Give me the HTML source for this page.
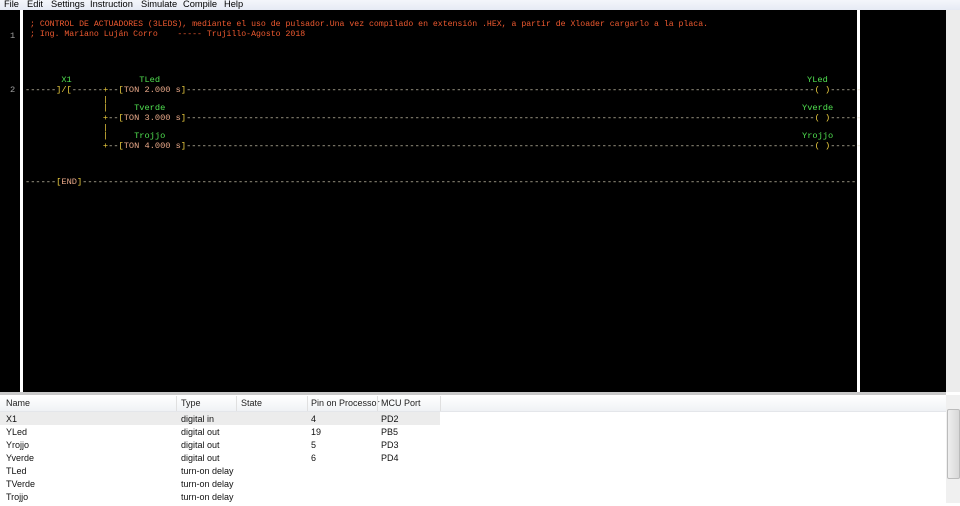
<!DOCTYPE html>
<html><head><meta charset="utf-8"><style>
*{margin:0;padding:0}
body{width:960px;height:503px;overflow:hidden;background:#fff;position:relative;font-family:"Liberation Sans",sans-serif}
.menu{position:absolute;left:0;top:0;width:960px;height:10px;background:linear-gradient(#f4f6fb,#e6eaf4);font-size:9.3px;line-height:10px;color:#000}
.menu span{position:absolute;top:-1px}
.main{position:absolute;left:0;top:10px;width:946px;height:382px;background:#000;overflow:hidden}
.vl{position:absolute;top:0;width:3px;height:382px;background:#fff}
.t{position:absolute;font-family:"Liberation Mono",monospace;white-space:pre;line-height:10px}
.lad{font-size:8.67px}
.cm{font-size:8.2px;color:#f05a30}
.d{color:#d8d0b8}.b{color:#f0d040}.n{color:#e8a888}.g{color:#50e050}.ln{color:#a0a0a0;font-size:8.67px}
.sb{position:absolute;right:0;width:14px;background:#ececec}
.panel{position:absolute;left:0;top:392px;width:946px;height:111px;background:#fff;border-top:3px solid #c8c8c8}
.hdr{position:absolute;left:0;top:1px;width:946px;height:15px;background:linear-gradient(#fff,#f0f2f5);border-bottom:1px solid #e4e6ea;font-size:9px;color:#222}
.hdr span,.row span{position:absolute;top:2px}
.sep{position:absolute;top:0;width:1px;height:15px;background:#e0e0e0}
.row{position:absolute;left:0;width:946px;height:13px;font-size:9px;color:#111}
</style></head><body>
<div class="menu"><span style="left:4px">File</span><span style="left:27px">Edit</span><span style="left:51px">Settings</span><span style="left:90px">Instruction</span><span style="left:141px">Simulate</span><span style="left:183px">Compile</span><span style="left:224px">Help</span></div>
<div class="main">
<div class="vl" style="left:20px"></div>
<div class="vl" style="left:857px"></div>
<div class="t ln" style="left:10px;top:21px">1</div>
<div class="t cm" style="left:30px;top:10px">; CONTROL DE ACTUADORES (3LEDS), mediante el uso de pulsador.Una vez compilado en extensión .HEX, a partir de Xloader cargarlo a la placa.</div>
<div class="t cm" style="left:30px;top:20px">; Ing. Mariano Luján Corro    ----- Trujillo-Agosto 2018</div>
<div class="t ln" style="left:10px;top:75px">2</div>
<div class="t lad" style="left:25px;top:65px"><span class="g">       X1             TLed</span></div>
<div class="t lad" style="left:25px;top:75px"><span class="d">------</span><span class="b">]/[</span><span class="d">------</span><span class="b">+</span><span class="d">--</span><span class="b">[</span><span class="n">TON 2.000 s</span><span class="b">]</span><span class="d">-------------------------------------------------------------------------------------------------------------------------</span><span class="b">( )</span><span class="d">------</span></div>
<div class="t lad" style="left:807px;top:65px"><span class="g">YLed</span></div>
<div class="t lad b" style="left:25px;top:85px">               |</div>
<div class="t lad" style="left:25px;top:93px"><span class="b">               |</span><span class="g">     Tverde</span></div>
<div class="t lad" style="left:802px;top:93px"><span class="g">Yverde</span></div>
<div class="t lad" style="left:25px;top:103px"><span class="b">               +</span><span class="d">--</span><span class="b">[</span><span class="n">TON 3.000 s</span><span class="b">]</span><span class="d">-------------------------------------------------------------------------------------------------------------------------</span><span class="b">( )</span><span class="d">------</span></div>
<div class="t lad b" style="left:25px;top:113px">               |</div>
<div class="t lad" style="left:25px;top:121px"><span class="b">               |</span><span class="g">     Trojjo</span></div>
<div class="t lad" style="left:802px;top:121px"><span class="g">Yrojjo</span></div>
<div class="t lad" style="left:25px;top:131px"><span class="b">               +</span><span class="d">--</span><span class="b">[</span><span class="n">TON 4.000 s</span><span class="b">]</span><span class="d">-------------------------------------------------------------------------------------------------------------------------</span><span class="b">( )</span><span class="d">------</span></div>
<div class="t lad" style="left:25px;top:167px"><span class="d">------</span><span class="b">[</span><span class="n">END</span><span class="b">]</span><span class="d">-----------------------------------------------------------------------------------------------------------------------------------------------------</span></div>
</div>
<div class="sb" style="top:10px;height:382px"></div>
<div class="panel">
<div class="hdr"><span style="left:6px">Name</span><span style="left:181px">Type</span><span style="left:241px">State</span><span style="left:311px">Pin on Processor</span><span style="left:381px">MCU Port</span>
<div class="sep" style="left:176px"></div><div class="sep" style="left:236px"></div><div class="sep" style="left:307px"></div><div class="sep" style="left:377px"></div><div class="sep" style="left:440px"></div></div>
<div class="row" style="top:17px;width:440px;background:#ececec"><span style="left:6px">X1</span><span style="left:181px">digital in</span><span style="left:311px">4</span><span style="left:381px">PD2</span></div>
<div class="row" style="top:30px"><span style="left:6px">YLed</span><span style="left:181px">digital out</span><span style="left:311px">19</span><span style="left:381px">PB5</span></div>
<div class="row" style="top:43px"><span style="left:6px">Yrojjo</span><span style="left:181px">digital out</span><span style="left:311px">5</span><span style="left:381px">PD3</span></div>
<div class="row" style="top:56px"><span style="left:6px">Yverde</span><span style="left:181px">digital out</span><span style="left:311px">6</span><span style="left:381px">PD4</span></div>
<div class="row" style="top:69px"><span style="left:6px">TLed</span><span style="left:181px">turn-on delay</span></div>
<div class="row" style="top:82px"><span style="left:6px">TVerde</span><span style="left:181px">turn-on delay</span></div>
<div class="row" style="top:95px"><span style="left:6px">Trojjo</span><span style="left:181px">turn-on delay</span></div>
</div>
<div class="sb" style="top:395px;height:108px;background:#f0f0f0"><div style="position:absolute;left:1px;top:14px;width:11px;height:68px;background:linear-gradient(90deg,#eee,#d8d8d8);border:1px solid #bbb;border-radius:2px"></div></div>
</body></html>
